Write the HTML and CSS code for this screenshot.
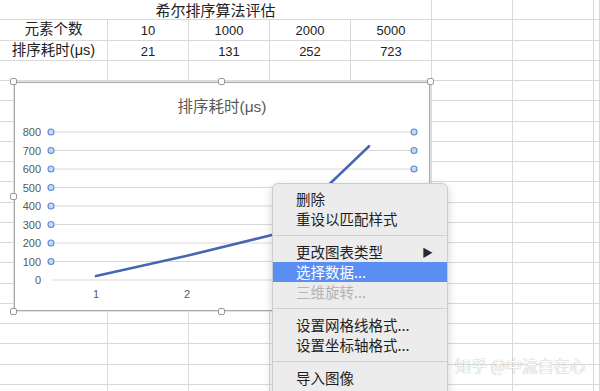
FILE: index.html
```html
<!DOCTYPE html>
<html lang="zh">
<head>
<meta charset="utf-8">
<title>希尔排序算法评估</title>
<link rel="stylesheet" href="styles.css">
</head>
<body>
<div class="screen">
  <div class="sheet">
    <div class="cell title">希尔排序算法评估</div><div class="cell"></div><div class="cell"></div><div class="cell"></div>
    <div class="cell cjk">元素个数</div><div class="cell num">10</div><div class="cell num">1000</div><div class="cell num">2000</div><div class="cell num">5000</div><div class="cell"></div><div class="cell"></div><div class="cell"></div>
    <div class="cell cjk">排序耗时(μs)</div><div class="cell num">21</div><div class="cell num">131</div><div class="cell num">252</div><div class="cell num">723</div><div class="cell"></div><div class="cell"></div><div class="cell"></div>
    <div class="cell"></div><div class="cell"></div><div class="cell"></div><div class="cell"></div><div class="cell"></div><div class="cell"></div><div class="cell"></div><div class="cell"></div>
    <div class="cell"></div><div class="cell"></div><div class="cell"></div><div class="cell"></div><div class="cell"></div><div class="cell"></div><div class="cell"></div><div class="cell"></div>
    <div class="cell"></div><div class="cell"></div><div class="cell"></div><div class="cell"></div><div class="cell"></div><div class="cell"></div><div class="cell"></div><div class="cell"></div>
    <div class="cell"></div><div class="cell"></div><div class="cell"></div><div class="cell"></div><div class="cell"></div><div class="cell"></div><div class="cell"></div><div class="cell"></div>
    <div class="cell"></div><div class="cell"></div><div class="cell"></div><div class="cell"></div><div class="cell"></div><div class="cell"></div><div class="cell"></div><div class="cell"></div>
    <div class="cell"></div><div class="cell"></div><div class="cell"></div><div class="cell"></div><div class="cell"></div><div class="cell"></div><div class="cell"></div><div class="cell"></div>
    <div class="cell"></div><div class="cell"></div><div class="cell"></div><div class="cell"></div><div class="cell"></div><div class="cell"></div><div class="cell"></div><div class="cell"></div>
    <div class="cell"></div><div class="cell"></div><div class="cell"></div><div class="cell"></div><div class="cell"></div><div class="cell"></div><div class="cell"></div><div class="cell"></div>
    <div class="cell"></div><div class="cell"></div><div class="cell"></div><div class="cell"></div><div class="cell"></div><div class="cell"></div><div class="cell"></div><div class="cell"></div>
    <div class="cell"></div><div class="cell"></div><div class="cell"></div><div class="cell"></div><div class="cell"></div><div class="cell"></div><div class="cell"></div><div class="cell"></div>
    <div class="cell"></div><div class="cell"></div><div class="cell"></div><div class="cell"></div><div class="cell"></div><div class="cell"></div><div class="cell"></div><div class="cell"></div>
    <div class="cell"></div><div class="cell"></div><div class="cell"></div><div class="cell"></div><div class="cell"></div><div class="cell"></div><div class="cell"></div><div class="cell"></div>
    <div class="cell"></div><div class="cell"></div><div class="cell"></div><div class="cell"></div><div class="cell"></div><div class="cell"></div><div class="cell"></div><div class="cell"></div>
    <div class="cell"></div><div class="cell"></div><div class="cell"></div><div class="cell"></div><div class="cell"></div><div class="cell"></div><div class="cell"></div><div class="cell"></div>
    <div class="cell"></div><div class="cell"></div><div class="cell"></div><div class="cell"></div><div class="cell"></div><div class="cell"></div><div class="cell"></div><div class="cell"></div>
    <div class="cell"></div><div class="cell"></div><div class="cell"></div><div class="cell"></div><div class="cell"></div><div class="cell"></div><div class="cell"></div><div class="cell"></div>
    <div class="cell"></div><div class="cell"></div><div class="cell"></div><div class="cell"></div><div class="cell"></div><div class="cell"></div><div class="cell"></div><div class="cell"></div>
  </div>

  <div class="chart">
    <div class="chart-title">排序耗时(μs)</div>
    <svg class="plot" width="416" height="229" viewBox="0 0 416 229">
      <g class="grid">
        <line x1="41" y1="50" x2="396" y2="50"/>
        <line x1="41" y1="68.5" x2="396" y2="68.5"/>
        <line x1="41" y1="87" x2="396" y2="87"/>
        <line x1="41" y1="105.5" x2="396" y2="105.5"/>
        <line x1="41" y1="124" x2="396" y2="124"/>
        <line x1="41" y1="142.5" x2="396" y2="142.5"/>
        <line x1="41" y1="161" x2="396" y2="161"/>
        <line x1="41" y1="179.5" x2="396" y2="179.5"/>
        <line x1="38" y1="198" x2="396" y2="198"/>
      </g>
      <g class="ylabels">
        <text x="27" y="54">800</text>
        <text x="27" y="72.5">700</text>
        <text x="27" y="91">600</text>
        <text x="27" y="109.5">500</text>
        <text x="27" y="128">400</text>
        <text x="27" y="146.5">300</text>
        <text x="27" y="165">200</text>
        <text x="27" y="183.5">100</text>
        <text x="27" y="202">0</text>
      </g>
      <g class="xlabels">
        <text x="82" y="216">1</text>
        <text x="173" y="216">2</text>
        <text x="264" y="216">3</text>
        <text x="355" y="216">4</text>
      </g>
      <polyline class="series" points="82,194.1 173,173.8 264,151.4 355,64.2"/>
      <g class="marks">
        <circle cx="37" cy="50" r="3"/>
        <circle cx="37" cy="68.5" r="3"/>
        <circle cx="37" cy="87" r="3"/>
        <circle cx="37" cy="105.5" r="3"/>
        <circle cx="37" cy="124" r="3"/>
        <circle cx="37" cy="142.5" r="3"/>
        <circle cx="37" cy="161" r="3"/>
        <circle cx="37" cy="179.5" r="3"/>
        <circle cx="400" cy="50" r="3"/>
        <circle cx="400" cy="68.5" r="3"/>
        <circle cx="400" cy="87" r="3"/>
        <circle cx="400" cy="105.5" r="3"/>
        <circle cx="400" cy="124" r="3"/>
        <circle cx="400" cy="142.5" r="3"/>
        <circle cx="400" cy="161" r="3"/>
        <circle cx="400" cy="179.5" r="3"/>
      </g>
    </svg>
    <span class="handle h-tl"></span>
    <span class="handle h-tc"></span>
    <span class="handle h-tr"></span>
    <span class="handle h-ml"></span>
    <span class="handle h-mr"></span>
    <span class="handle h-bl"></span>
    <span class="handle h-bc"></span>
    <span class="handle h-br"></span>
  </div>

  <div class="menu">
    <div class="item">删除</div>
    <div class="item">重设以匹配样式</div>
    <div class="sep"></div>
    <div class="item has-sub">更改图表类型<span class="arrow">▶</span></div>
    <div class="item active">选择数据...</div>
    <div class="item disabled">三维旋转...</div>
    <div class="sep"></div>
    <div class="item">设置网格线格式...</div>
    <div class="item">设置坐标轴格式...</div>
    <div class="sep"></div>
    <div class="item">导入图像</div>
  </div>

  <div class="watermark">知乎 @中流自在心</div>
</div>
</body>
</html>
```

FILE: styles.css
```css
html, body {
  margin: 0;
  padding: 0;
  background: #fff;
}

.screen {
  position: relative;
  width: 600px;
  height: 391px;
  overflow: hidden;
  font-family: "Liberation Sans", "Noto Sans CJK SC", sans-serif;
  color: #222;
}

.sheet {
  display: grid;
  grid-template-columns: 108px repeat(6, 81px) 6px;
  grid-auto-rows: 20.25px;
}

.cell {
  box-sizing: border-box;
  border-right: 1px solid #d9d9d9;
  border-bottom: 1px solid #d9d9d9;
  text-align: center;
  line-height: 20px;
  font-size: 13px;
  white-space: nowrap;
  overflow: hidden;
}

.title {
  grid-column: span 5;
  font-family: "Noto Sans CJK SC", sans-serif;
  font-size: 15px;
  line-height: 19px;
}

.cjk {
  font-family: "Liberation Sans", "Noto Sans CJK SC", sans-serif;
  font-size: 14.5px;
  line-height: 19px;
}

.num {
  font-size: 13px;
  line-height: 21px;
}

/* chart */
.chart {
  position: absolute;
  left: 14px;
  top: 82px;
  width: 416px;
  height: 229px;
  box-sizing: border-box;
  background: #fff;
  border: 1px solid #a9a9a9;
  box-shadow: 0 0 0 1px #e2e2e2;
}

.chart-title {
  position: absolute;
  left: 0;
  right: 0;
  top: 13px;
  text-align: center;
  font-family: "Liberation Sans", "Noto Sans CJK SC", sans-serif;
  font-size: 15.5px;
  line-height: 22px;
  color: #595959;
}

.plot {
  position: absolute;
  left: -1px;
  top: -1px;
}

.grid line {
  stroke: #d9d9d9;
  stroke-width: 1;
}

.ylabels text {
  font-family: "Liberation Sans", sans-serif;
  font-size: 11px;
  fill: #595959;
  text-anchor: end;
}

.xlabels text {
  font-family: "Liberation Sans", sans-serif;
  font-size: 11px;
  fill: #595959;
  text-anchor: middle;
}

.series {
  fill: none;
  stroke: #4767b3;
  stroke-width: 2.6;
  stroke-linecap: round;
  stroke-linejoin: round;
}

.marks circle {
  fill: #c6d9f3;
  stroke: #5b8bd0;
  stroke-width: 1.1;
}

.handle {
  position: absolute;
  width: 7px;
  height: 7px;
  box-sizing: border-box;
  background: #fff;
  border: 1px solid #9a9a9a;
  border-radius: 2px;
}

.h-tl { left: -5px; top: -5px; }
.h-tc { left: 203px; top: -5px; }
.h-tr { right: -5px; top: -5px; }
.h-ml { left: -5px; top: 110px; }
.h-mr { right: -5px; top: 110px; }
.h-bl { left: -5px; bottom: -5px; }
.h-bc { left: 203px; bottom: -5px; }
.h-br { right: -5px; bottom: -5px; }

/* context menu */
.menu {
  position: absolute;
  left: 272px;
  top: 183px;
  width: 176px;
  height: 230px;
  box-sizing: border-box;
  padding-top: 5px;
  background: #ececec;
  border: 1px solid #cdcdcd;
  border-radius: 6px;
  box-shadow: 0 3px 10px rgba(0, 0, 0, 0.18);
  font-family: "Noto Sans CJK SC", sans-serif;
  font-size: 14.5px;
  color: #1e1e1e;
}

.item {
  display: flex;
  align-items: center;
  justify-content: space-between;
  height: 20px;
  padding: 0 14px 0 23px;
  line-height: 20px;
  white-space: nowrap;
}

.item.active {
  background: #5a8ef3;
  color: #fff;
}

.item.disabled {
  color: #b3b3b3;
}

.arrow {
  font-size: 11px;
  color: #2a2a2a;
}

.sep {
  height: 13px;
  display: flex;
  align-items: center;
}

.sep::before {
  content: "";
  display: block;
  width: 100%;
  height: 1px;
  background: #d2d2d2;
}

.watermark {
  position: absolute;
  left: 455px;
  top: 354px;
  font-family: "Noto Sans CJK SC", sans-serif;
  font-size: 16px;
  line-height: 22px;
  color: #fff;
  text-shadow: 0 0 1px rgba(0, 0, 0, 0.45);
  white-space: nowrap;
}
```
